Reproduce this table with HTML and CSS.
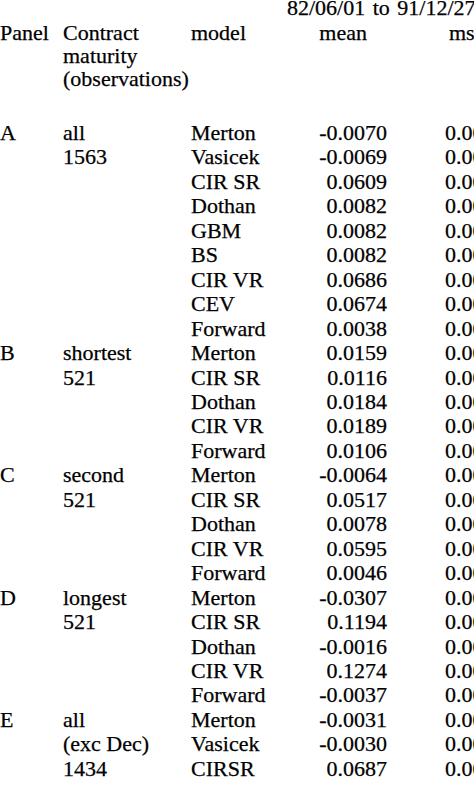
FILE: index.html
```html
<!DOCTYPE html>
<html>
<head>
<meta charset="utf-8">
<link rel="stylesheet" href="styles.css">
</head>
<body>
<div class="page">
  <div class="period">82/06/01 to 91/12/27</div>
  <div class="head">
    <div class="c-panel">Panel</div>
    <div class="c-contract">Contract<br>maturity<br>(observations)</div>
    <div class="c-model">model</div>
    <div class="c-mean h-mean">mean</div>
    <div class="c-mse h-mse">mse</div>
  </div>
  <div class="rows">
    <div class="c-panel">A</div><div class="c-contract">all</div><div class="c-model">Merton</div><div class="c-mean">-0.0070</div><div class="c-mse">0.0008</div>
    <div class="c-panel"></div><div class="c-contract">1563</div><div class="c-model">Vasicek</div><div class="c-mean">-0.0069</div><div class="c-mse">0.0008</div>
    <div class="c-panel"></div><div class="c-contract"></div><div class="c-model">CIR SR</div><div class="c-mean">0.0609</div><div class="c-mse">0.0062</div>
    <div class="c-panel"></div><div class="c-contract"></div><div class="c-model">Dothan</div><div class="c-mean">0.0082</div><div class="c-mse">0.0009</div>
    <div class="c-panel"></div><div class="c-contract"></div><div class="c-model">GBM</div><div class="c-mean">0.0082</div><div class="c-mse">0.0009</div>
    <div class="c-panel"></div><div class="c-contract"></div><div class="c-model">BS</div><div class="c-mean">0.0082</div><div class="c-mse">0.0009</div>
    <div class="c-panel"></div><div class="c-contract"></div><div class="c-model">CIR VR</div><div class="c-mean">0.0686</div><div class="c-mse">0.0080</div>
    <div class="c-panel"></div><div class="c-contract"></div><div class="c-model">CEV</div><div class="c-mean">0.0674</div><div class="c-mse">0.0078</div>
    <div class="c-panel"></div><div class="c-contract"></div><div class="c-model">Forward</div><div class="c-mean">0.0038</div><div class="c-mse">0.0008</div>
    <div class="c-panel">B</div><div class="c-contract">shortest</div><div class="c-model">Merton</div><div class="c-mean">0.0159</div><div class="c-mse">0.0006</div>
    <div class="c-panel"></div><div class="c-contract">521</div><div class="c-model">CIR SR</div><div class="c-mean">0.0116</div><div class="c-mse">0.0005</div>
    <div class="c-panel"></div><div class="c-contract"></div><div class="c-model">Dothan</div><div class="c-mean">0.0184</div><div class="c-mse">0.0006</div>
    <div class="c-panel"></div><div class="c-contract"></div><div class="c-model">CIR VR</div><div class="c-mean">0.0189</div><div class="c-mse">0.0006</div>
    <div class="c-panel"></div><div class="c-contract"></div><div class="c-model">Forward</div><div class="c-mean">0.0106</div><div class="c-mse">0.0005</div>
    <div class="c-panel">C</div><div class="c-contract">second</div><div class="c-model">Merton</div><div class="c-mean">-0.0064</div><div class="c-mse">0.0008</div>
    <div class="c-panel"></div><div class="c-contract">521</div><div class="c-model">CIR SR</div><div class="c-mean">0.0517</div><div class="c-mse">0.0040</div>
    <div class="c-panel"></div><div class="c-contract"></div><div class="c-model">Dothan</div><div class="c-mean">0.0078</div><div class="c-mse">0.0009</div>
    <div class="c-panel"></div><div class="c-contract"></div><div class="c-model">CIR VR</div><div class="c-mean">0.0595</div><div class="c-mse">0.0050</div>
    <div class="c-panel"></div><div class="c-contract"></div><div class="c-model">Forward</div><div class="c-mean">0.0046</div><div class="c-mse">0.0008</div>
    <div class="c-panel">D</div><div class="c-contract">longest</div><div class="c-model">Merton</div><div class="c-mean">-0.0307</div><div class="c-mse">0.0020</div>
    <div class="c-panel"></div><div class="c-contract">521</div><div class="c-model">CIR SR</div><div class="c-mean">0.1194</div><div class="c-mse">0.0060</div>
    <div class="c-panel"></div><div class="c-contract"></div><div class="c-model">Dothan</div><div class="c-mean">-0.0016</div><div class="c-mse">0.0010</div>
    <div class="c-panel"></div><div class="c-contract"></div><div class="c-model">CIR VR</div><div class="c-mean">0.1274</div><div class="c-mse">0.0080</div>
    <div class="c-panel"></div><div class="c-contract"></div><div class="c-model">Forward</div><div class="c-mean">-0.0037</div><div class="c-mse">0.0010</div>
    <div class="c-panel">E</div><div class="c-contract">all</div><div class="c-model">Merton</div><div class="c-mean">-0.0031</div><div class="c-mse">0.0006</div>
    <div class="c-panel"></div><div class="c-contract">(exc Dec)</div><div class="c-model">Vasicek</div><div class="c-mean">-0.0030</div><div class="c-mse">0.0006</div>
    <div class="c-panel"></div><div class="c-contract">1434</div><div class="c-model">CIRSR</div><div class="c-mean">0.0687</div><div class="c-mse">0.0080</div>
  </div>
</div>
</body>
</html>
```

FILE: styles.css
```css
html, body {
  margin: 0;
  padding: 0;
  background: #ffffff;
  overflow: hidden;
}

.page {
  width: 474px;
  height: 789px;
  overflow: hidden;
  font-family: "Liberation Serif", "Times New Roman", serif;
  font-size: 22px;
  color: #000000;
  -webkit-text-stroke: 0.25px #000000;
  white-space: nowrap;
}

.period {
  margin-top: -4px;
  padding-left: 287px;
  line-height: 23px;
  word-spacing: 2px;
}

.head,
.rows {
  display: grid;
  grid-template-columns: 63px 128px 109px 87px 87px;
}

.head {
  margin-top: 2px;
  line-height: 23px;
}

.rows {
  margin-top: 31px;
  line-height: 24.45px;
}

.c-mean {
  text-align: right;
}

.c-mse {
  padding-left: 58px;
  overflow: hidden;
}

.h-mean {
  padding-right: 20px;
}

.h-mse {
  padding-left: 62px;
}
```
